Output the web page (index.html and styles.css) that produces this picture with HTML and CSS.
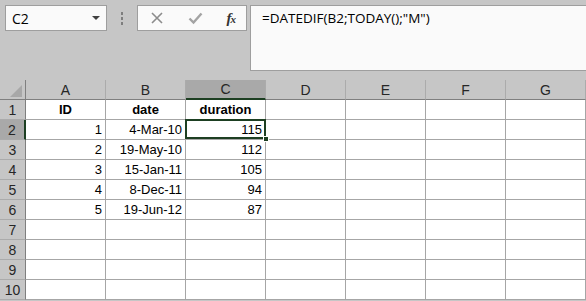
FILE: index.html
```html
<!DOCTYPE html>
<html lang="en">
<head>
  <meta charset="UTF-8">
  <title>Sheet - DATEDIF</title>
  <link rel="stylesheet" href="styles.css">
</head>
<body>
  <div class="topbar">
    <div class="namebox">
      <span>C2</span>
      <span class="caret"></span>
    </div>
    <div class="grip"><i></i><i></i><i></i></div>
    <div class="fxbuttons">
      <svg class="ico" width="14" height="14" viewBox="0 0 14 14"><path d="M2 2 L12 12 M12 2 L2 12" stroke="#8c8c8c" stroke-width="1.6" fill="none"/></svg>
      <svg class="ico" width="15" height="14" viewBox="0 0 15 14"><path d="M1.5 7.5 L5.5 11.5 L13.5 2.5" stroke="#a3a3a3" stroke-width="2.4" fill="none"/></svg>
      <span class="fx">f<span class="x">x</span></span>
    </div>
    <div class="formula">=DATEDIF(B2;TODAY();"M")</div>
  </div>

  <div class="sheet">
    <div class="hd corner"><span class="tri"></span></div>
    <div class="hd col">A</div>
    <div class="hd col">B</div>
    <div class="hd col sel">C</div>
    <div class="hd col">D</div>
    <div class="hd col">E</div>
    <div class="hd col">F</div>
    <div class="hd col">G</div>

    <div class="hd row">1</div>
    <div class="c mid b">ID</div>
    <div class="c mid b">date</div>
    <div class="c mid b">duration</div>
    <div class="c"></div><div class="c"></div><div class="c"></div><div class="c"></div>

    <div class="hd row sel">2</div>
    <div class="c num">1</div>
    <div class="c num">4-Mar-10</div>
    <div class="c num active">115<span class="handle"></span></div>
    <div class="c"></div><div class="c"></div><div class="c"></div><div class="c"></div>

    <div class="hd row">3</div>
    <div class="c num">2</div>
    <div class="c num">19-May-10</div>
    <div class="c num">112</div>
    <div class="c"></div><div class="c"></div><div class="c"></div><div class="c"></div>

    <div class="hd row">4</div>
    <div class="c num">3</div>
    <div class="c num">15-Jan-11</div>
    <div class="c num">105</div>
    <div class="c"></div><div class="c"></div><div class="c"></div><div class="c"></div>

    <div class="hd row">5</div>
    <div class="c num">4</div>
    <div class="c num">8-Dec-11</div>
    <div class="c num">94</div>
    <div class="c"></div><div class="c"></div><div class="c"></div><div class="c"></div>

    <div class="hd row">6</div>
    <div class="c num">5</div>
    <div class="c num">19-Jun-12</div>
    <div class="c num">87</div>
    <div class="c"></div><div class="c"></div><div class="c"></div><div class="c"></div>

    <div class="hd row">7</div>
    <div class="c"></div><div class="c"></div><div class="c"></div><div class="c"></div><div class="c"></div><div class="c"></div><div class="c"></div>
    <div class="hd row">8</div>
    <div class="c"></div><div class="c"></div><div class="c"></div><div class="c"></div><div class="c"></div><div class="c"></div><div class="c"></div>
    <div class="hd row">9</div>
    <div class="c"></div><div class="c"></div><div class="c"></div><div class="c"></div><div class="c"></div><div class="c"></div><div class="c"></div>
    <div class="hd row">10</div>
    <div class="c"></div><div class="c"></div><div class="c"></div><div class="c"></div><div class="c"></div><div class="c"></div><div class="c"></div>
  </div>
</body>
</html>
```

FILE: styles.css
```css
* { box-sizing: border-box; }
body { margin: 0; background: #c6c6c6; font-family: 'Liberation Sans', Arial, sans-serif; color: #000; overflow: hidden; }

.topbar { height: 80px; padding: 5px 0 0 5px; display: flex; align-items: flex-start; }
.namebox { width: 102px; height: 26px; background: #fafafa; border: 1px solid #9e9e9e; display: flex; align-items: center; justify-content: space-between; padding: 0 6px 0 6px; font-family: 'Open Sans', sans-serif; font-size: 14px; }
.caret { width: 0; height: 0; border-left: 4px solid transparent; border-right: 4px solid transparent; border-top: 4px solid #404040; margin-top: -1px; }
.grip { width: 30px; height: 26px; display: flex; flex-direction: column; align-items: center; justify-content: center; gap: 2px; }
.grip i { width: 2px; height: 3px; background: #7e7e7e; }
.fxbuttons { width: 110px; height: 26px; background: #fafafa; border: 1px solid #9e9e9e; display: flex; align-items: center; justify-content: space-between; padding: 0 11px 0 12px; }
.fx { font-family: 'Liberation Serif', serif; font-style: italic; font-weight: bold; font-size: 15px; color: #333; line-height: 1; letter-spacing: -1px; }
.fx .x { font-size: 11px; }
.formula { flex: 1; height: 66px; margin-left: 3px; margin-right: -2px; background: #fafafa; border: 1px solid #9e9e9e; padding: 3px 0 0 11px; font-family: 'Open Sans', sans-serif; font-size: 13.5px; }

.sheet { display: grid; grid-template-columns: 26px repeat(7, 80px); grid-auto-rows: 20px; background: #fff; }
.hd { background: #c6c6c6; color: #262626; font-size: 14px; display: flex; align-items: center; justify-content: center; }
.col { border-right: 1px solid #ababab; border-bottom: 1px solid #7f7f7f; }
.row { border-right: 1px solid #7f7f7f; border-bottom: 1px solid #ababab; font-size: 14px; }
.corner { border-right: 1px solid #7f7f7f; border-bottom: 1px solid #7f7f7f; position: relative; }
.tri { position: absolute; right: 3px; bottom: 2px; width: 0; height: 0; border-left: 12px solid transparent; border-bottom: 12px solid #a8a8a8; }
.hd.sel { background: #a9a9a9; }
.col.sel { border-bottom: 2px solid #1d3f22; }
.row.sel { border-right: 2px solid #1d3f22; }

.c { border-right: 1px solid #a6a6a6; border-bottom: 1px solid #a6a6a6; font-size: 13px; display: flex; align-items: center; padding: 0 3px; white-space: nowrap; }
.num { justify-content: flex-end; }
.mid { justify-content: center; }
.b { font-weight: bold; }
.active { position: relative; }
.active::after { content: ""; position: absolute; left: -1px; top: -1px; right: -1px; bottom: 0; border: 2px solid #1d3f22; }
.handle { position: absolute; right: -4px; bottom: -3px; width: 6px; height: 6px; background: #1d3f22; border: 1px solid #fff; z-index: 2; }
```
